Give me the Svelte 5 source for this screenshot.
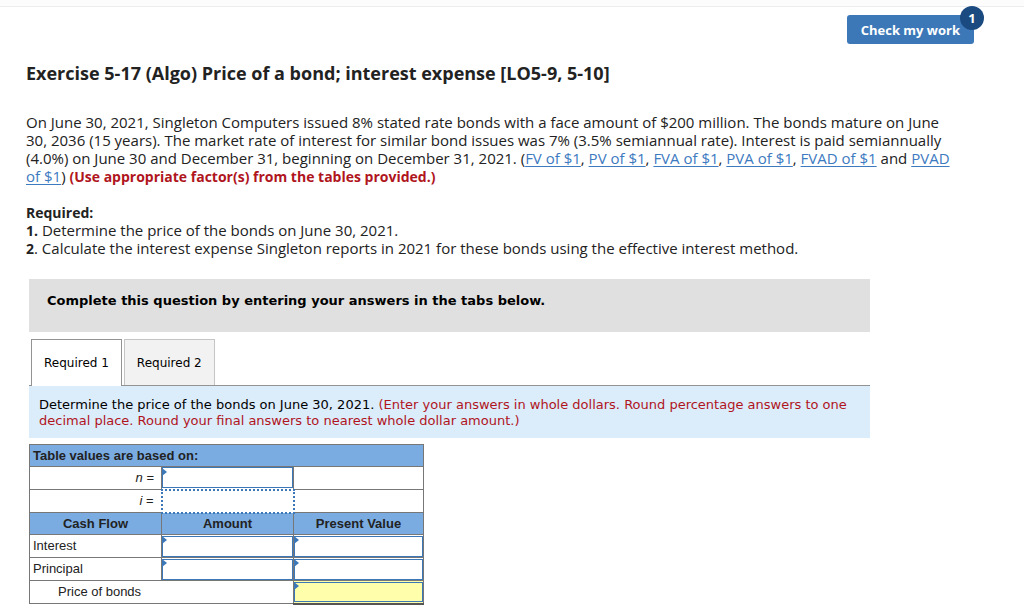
<script lang="ts">
  const tabs = ['Required 1', 'Required 2'];
  const cashFlows = ['Interest', 'Principal'];

  let current = $state(0);
  let n = $state('');
  let rate = $state('');
  let total = $state('');
  let amounts = $state(['', '']);
  let values = $state(['', '']);
</script>

<div class="page">
  <header>
    <button class="check" type="button">
      Check my work
      <span class="badge">1</span>
    </button>
  </header>

  <main>
    <h1>Exercise 5-17 (Algo) Price of a bond; interest expense [LO5-9, 5-10]</h1>

    <p class="problem">
      On June 30, 2021, Singleton Computers issued 8% stated rate bonds with a face amount of $200 million. The bonds mature on June
      30, 2036 (15 years). The market rate of interest for similar bond issues was 7% (3.5% semiannual rate). Interest is paid semiannually
      (4.0%) on June 30 and December 31, beginning on December 31, 2021. (<a href="#fv">FV of $1</a>, <a href="#pv">PV of $1</a>,
      <a href="#fva">FVA of $1</a>, <a href="#pva">PVA of $1</a>, <a href="#fvad">FVAD of $1</a> and <a href="#pvad">PVAD of $1</a>)
      <strong class="warn">(Use appropriate factor(s) from the tables provided.)</strong>
    </p>

    <div class="required">
      <div><b>Required:</b></div>
      <div><b>1.</b> Determine the price of the bonds on June 30, 2021.</div>
      <div><b>2</b>. Calculate the interest expense Singleton reports in 2021 for these bonds using the effective interest method.</div>
    </div>

    <section class="worksheet">
      <div class="banner">Complete this question by entering your answers in the tabs below.</div>

      <div class="tabs" role="tablist">
        {#each tabs as tab, index}
          <button
            class="tab"
            class:active={current === index}
            type="button"
            role="tab"
            aria-selected={current === index}
            onclick={() => (current = index)}
          >{tab}</button>
        {/each}
      </div>

      <p class="prompt">
        Determine the price of the bonds on June 30, 2021.
        <span class="hint">(Enter your answers in whole dollars. Round percentage answers to one decimal place. Round your final answers to nearest whole dollar amount.)</span>
      </p>

      <table>
        <colgroup>
          <col class="flow" />
          <col class="amount" />
          <col class="value" />
        </colgroup>
        <tbody>
          <tr class="head">
            <th class="title" colspan="3">Table values are based on:</th>
          </tr>
          <tr>
            <td class="variable"><label for="n"><i>n</i> =</label></td>
            <td class="entry"><input id="n" bind:value={n} /></td>
            <td></td>
          </tr>
          <tr>
            <td class="variable"><label for="i"><i>i</i> =</label></td>
            <td class="entry focused"><input id="i" bind:value={rate} /></td>
            <td></td>
          </tr>
          <tr class="head">
            <th>Cash Flow</th>
            <th>Amount</th>
            <th>Present Value</th>
          </tr>
          {#each cashFlows as flow, index}
            <tr>
              <td>{flow}</td>
              <td class="entry"><input aria-label="{flow} amount" bind:value={amounts[index]} /></td>
              <td class="entry"><input aria-label="{flow} present value" bind:value={values[index]} /></td>
            </tr>
          {/each}
          <tr>
            <td class="sum" colspan="2"><label for="total">Price of bonds</label></td>
            <td class="entry total"><input id="total" bind:value={total} /></td>
          </tr>
        </tbody>
      </table>
    </section>
  </main>
</div>

<style>
  :global(body) {
    background: #fff;
  }

  .page {
    border-top: 6px solid #fcfcfc;
    box-shadow: inset 0 1px #ececec;
    padding: 9px 50px 4px 26px;
    color: #222;
    font-family: 'Open Sans', sans-serif;
    font-size: 15px;
    line-height: 18px;
  }

  header {
    display: flex;
    justify-content: flex-end;
  }

  .check {
    position: relative;
    height: 29px;
    padding: 0 14px;
    border: 0;
    border-radius: 3px;
    background: #3c78b8;
    color: #fff;
    font: bold 13px/28px 'Open Sans', sans-serif;
  }

  .badge {
    position: absolute;
    top: -9px;
    right: -10px;
    width: 24px;
    border-radius: 50%;
    background: #1a4a80;
    line-height: 24px;
    text-align: center;
  }

  h1 {
    margin: 17px 0 28px;
    font-size: 18px;
    line-height: 24px;
  }

  .problem {
    margin: 0 20px 18px 0;
  }

  a {
    color: #3d7abf;
    text-underline-offset: 2px;
  }

  b,
  .warn {
    font-size: 14px;
    line-height: 16px;
  }

  .warn {
    color: #b0151d;
  }

  .worksheet {
    margin: 22px 104px 0 3px;
    color: #000;
    font-family: 'DejaVu Sans', sans-serif;
    font-size: 13px;
  }

  .banner {
    padding: 13px 18px 22px;
    background: #e0e0e0;
    font-weight: bold;
  }

  .tabs {
    display: flex;
    gap: 2px;
    margin-top: 7px;
    padding-left: 2px;
    border-bottom: 1px solid #939393;
  }

  .tab {
    height: 46px;
    padding: 0 12px;
    border: 1px solid #c5c5c5;
    border-bottom: 0;
    background: #f2f2f2;
    color: #000;
    font: 12px/16px 'DejaVu Sans', sans-serif;
  }

  .tab.active {
    margin-bottom: -1px;
    height: 47px;
    border-color: #939393;
    background: #fff;
  }

  .prompt {
    margin: 0;
    padding: 11px 20px 9px 10px;
    background: #dbecfb;
    line-height: 16px;
  }

  .hint {
    color: #b0151d;
  }

  table {
    width: 395px;
    margin-top: 6px;
    border-collapse: collapse;
    table-layout: fixed;
    color: #222;
    font: 13px/16px 'Liberation Sans', sans-serif;
  }

  .flow,
  .amount {
    width: 132px;
  }

  tr {
    height: 23px;
  }

  tr.head {
    height: 22px;
    background: #7aace2;
  }

  th,
  td {
    padding: 0 3px;
    border: 1px solid #777;
  }

  .title {
    text-align: left;
  }

  .variable {
    padding-right: 7px;
    text-align: right;
  }

  .sum {
    padding-left: 28px;
  }

  .entry {
    position: relative;
    padding: 0;
  }

  input {
    display: block;
    box-sizing: border-box;
    width: 100%;
    height: 21px;
    padding: 0 6px;
    border: 1px solid #3c78b8;
    border-radius: 0;
    outline: 0;
    background: transparent;
    font: inherit;
  }

  /* marker in the corner of a graded cell */
  .entry::before {
    content: '';
    position: absolute;
    top: 1px;
    left: 0;
    border: solid transparent;
    border-width: 4px 0 4px 5px;
    border-left-color: #3c78b8;
  }

  .focused {
    border: 2px dotted #3c78b8;
  }

  .focused::before {
    display: none;
  }

  .focused input {
    height: 20px;
    border: 0;
  }

  .total {
    border-top-color: #000;
    border-bottom: 2px solid #555;
    background: #ffffab;
  }

  .total input {
    height: 20px;
  }
</style>
